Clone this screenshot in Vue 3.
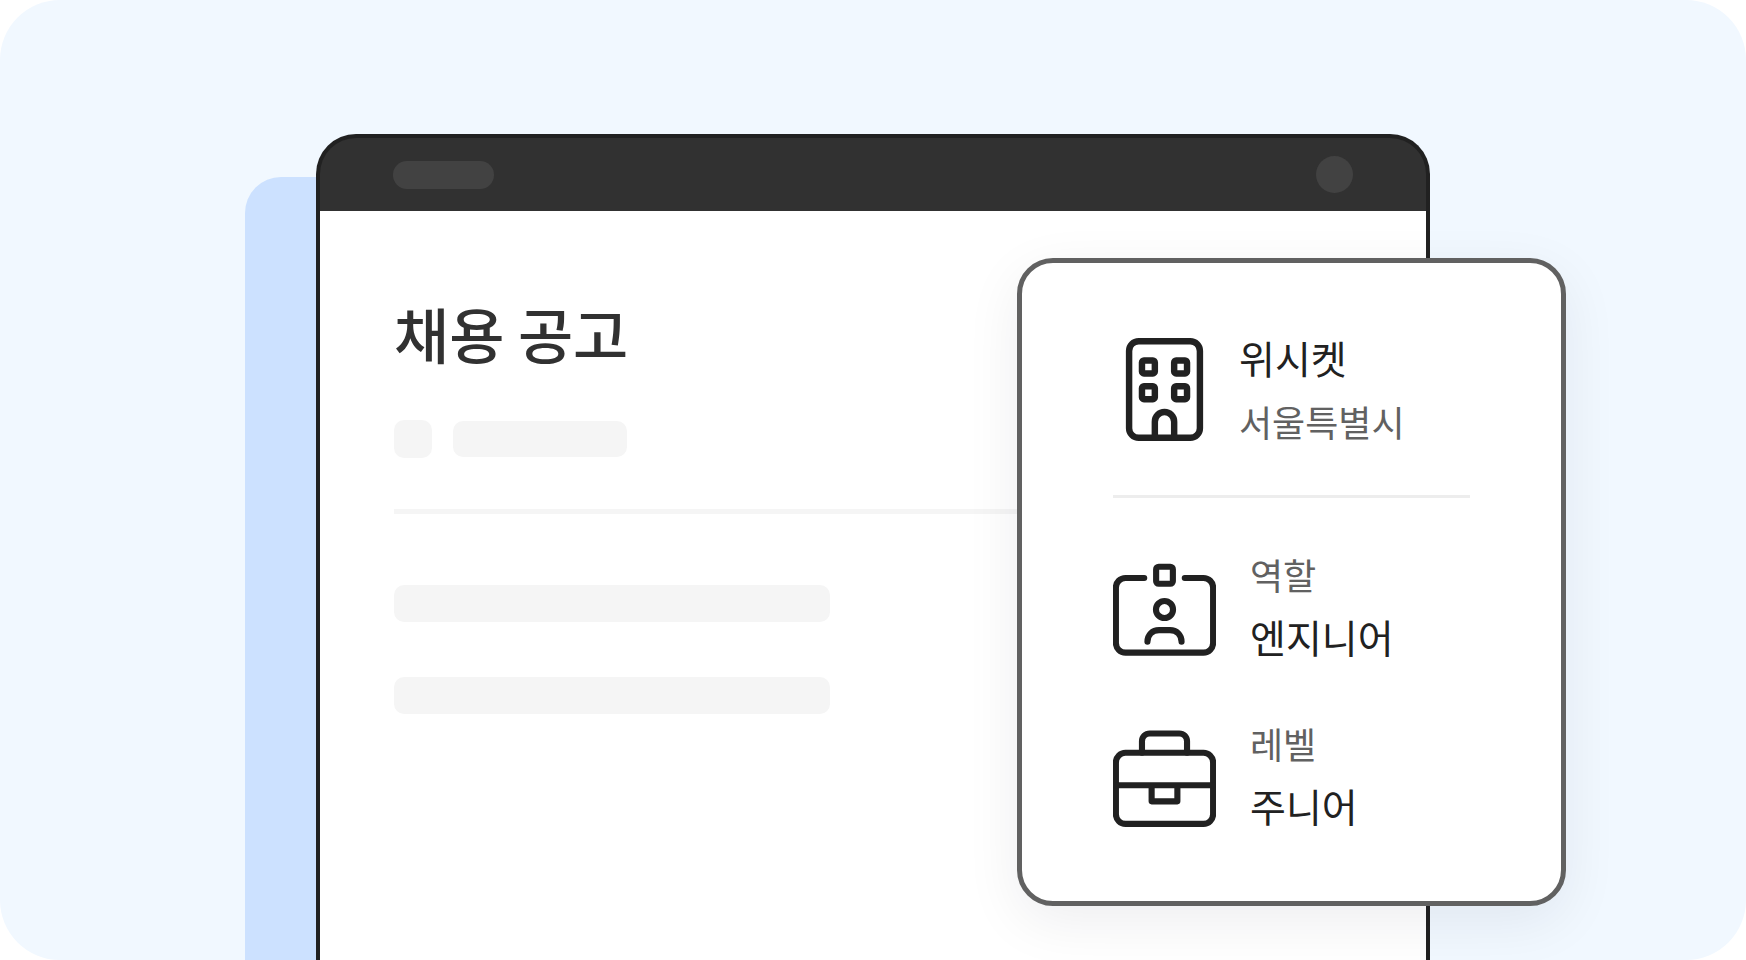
<script setup>
const details = [
  { id: 'role', label: '역할', value: '엔지니어' },
  { id: 'level', label: '레벨', value: '주니어' },
]
</script>

<template>
  <main class="stage">
    <div class="scene">
      <div class="backdrop"></div>

      <section class="window">
        <header class="titlebar">
          <span class="pill"></span>
          <span class="dot"></span>
        </header>
        <div class="content">
          <h1 class="title">채용 공고</h1>
          <div class="meta">
            <span class="block avatar"></span>
            <span class="block tag"></span>
          </div>
          <hr class="rule" />
          <div class="block line"></div>
          <div class="block line"></div>
        </div>
      </section>

      <aside class="card">
        <div class="company">
          <svg class="icon building" viewBox="0 0 32 32" aria-hidden="true">
            <rect x="5" y="1" width="22" height="30" rx="3" />
            <rect x="9" y="7" width="4" height="4" rx="0.6" />
            <rect x="19" y="7" width="4" height="4" rx="0.6" />
            <rect x="9" y="15" width="4" height="4" rx="0.6" />
            <rect x="19" y="15" width="4" height="4" rx="0.6" />
            <path d="M13 31v-5a3 3 0 0 1 6 0v5" />
          </svg>
          <div class="text">
            <p class="strong">위시켓</p>
            <p class="muted">서울특별시</p>
          </div>
        </div>

        <hr class="divider" />

        <div class="details">
          <div v-for="item in details" :key="item.id" class="detail">
            <svg v-if="item.id === 'role'" class="icon" viewBox="0 0 32 32" aria-hidden="true">
              <path d="M9.7 6.2H3.9a3 3 0 0 0-3 3v17.2a3 3 0 0 0 3 3h24.2a3 3 0 0 0 3-3V9.2a3 3 0 0 0-3-3h-5.8" />
              <rect x="13.4" y="2.7" width="5.2" height="5.3" rx="0.8" />
              <circle cx="16" cy="16" r="2.65" />
              <path d="M10.7 26c0-2.1 1.5-3.6 3.6-3.6h3.4c2.1 0 3.6 1.5 3.6 3.6" />
            </svg>
            <svg v-else class="icon" viewBox="0 0 32 32" aria-hidden="true">
              <rect x="0.9" y="8" width="30.2" height="22.1" rx="3" />
              <path d="M9 8V4.4A2.4 2.4 0 0 1 11.4 2h9.2A2.4 2.4 0 0 1 23 4.4V8" />
              <path d="M0.9 18.1h30.2M12 18.1v5h8v-5" />
            </svg>
            <div class="text">
              <p class="muted">{{ item.label }}</p>
              <p class="strong">{{ item.value }}</p>
            </div>
          </div>
        </div>
      </aside>
    </div>
  </main>
</template>

<style>
body {
  background: #fff;
}
</style>

<style scoped>
.stage {
  display: flex;
  box-sizing: border-box;
  min-height: 100vh;
  padding: 134px 316px 0;
  overflow: hidden;
  border-radius: 60px;
  background: #f1f8ff;
  font-family: "Noto Sans CJK KR", "Noto Sans", sans-serif;
}

.scene {
  position: relative;
  display: flex;
  flex: 1;
}

.backdrop {
  position: absolute;
  top: 43px;
  bottom: 0;
  left: -71px;
  width: 50%;
  border-radius: 36px 0 0 0;
  background: #cce1ff;
}

.window {
  position: relative;
  display: flex;
  flex: 1;
  flex-direction: column;
  overflow: hidden;
  border: 4px solid #212121;
  border-bottom: 0;
  border-radius: 40px 40px 0 0;
  background: #313131;
}

.titlebar {
  display: flex;
  align-items: center;
  justify-content: space-between;
  height: 73px;
  padding: 0 73px;
}

.pill {
  width: 101px;
  height: 28px;
  border-radius: 14px;
  background: #424242;
}

.dot {
  width: 37px;
  height: 37px;
  border-radius: 50%;
  background: #424242;
}

.content {
  flex: 1;
  padding: 78px 74px 0;
  background: #fff;
}

.title {
  margin: 0;
  color: #313131;
  font-size: 60px;
  font-weight: 500;
  line-height: 88px;
}

.block {
  border-radius: 10px;
  background: #f5f5f5;
}

.meta {
  display: flex;
  align-items: center;
  gap: 21px;
  margin-top: 43px;
}

.avatar {
  width: 38px;
  height: 38px;
}

.tag {
  width: 174px;
  height: 36px;
}

.rule {
  height: 5px;
  margin: 51px 0 71px;
  border: 0;
  background: #f5f5f5;
}

.line {
  width: 436px;
  height: 37px;
  margin-bottom: 55px;
}

.card {
  position: absolute;
  top: 124px;
  right: -136px;
  box-sizing: border-box;
  width: 549px;
  padding: 62px 91px 57px;
  border: 5px solid #616161;
  border-radius: 36px;
  background: #fff;
  box-shadow: 0 16px 56px rgba(20, 10, 40, 0.07);
}

.company,
.detail {
  display: flex;
  align-items: center;
}

.company {
  gap: 23px;
}

.detail {
  gap: 34px;
}

.detail .text {
  padding-bottom: 8px;
}

.icon {
  flex: none;
  width: 103px;
  height: 103px;
  fill: none;
  stroke: #212121;
  stroke-width: 1.9;
  stroke-linecap: round;
  stroke-linejoin: round;
}

.building {
  stroke-width: 2;
}

.divider {
  height: 3px;
  margin: 42px 0 45px;
  border: 0;
  background: #ededed;
}

.details {
  display: flex;
  flex-direction: column;
  gap: 37px;
}

.text p {
  margin: 0;
  line-height: 62px;
}

.company .text p {
  line-height: 64px;
}

.strong {
  color: #212121;
  font-size: 39px;
}

.muted {
  color: #616161;
  font-size: 36px;
}
</style>
